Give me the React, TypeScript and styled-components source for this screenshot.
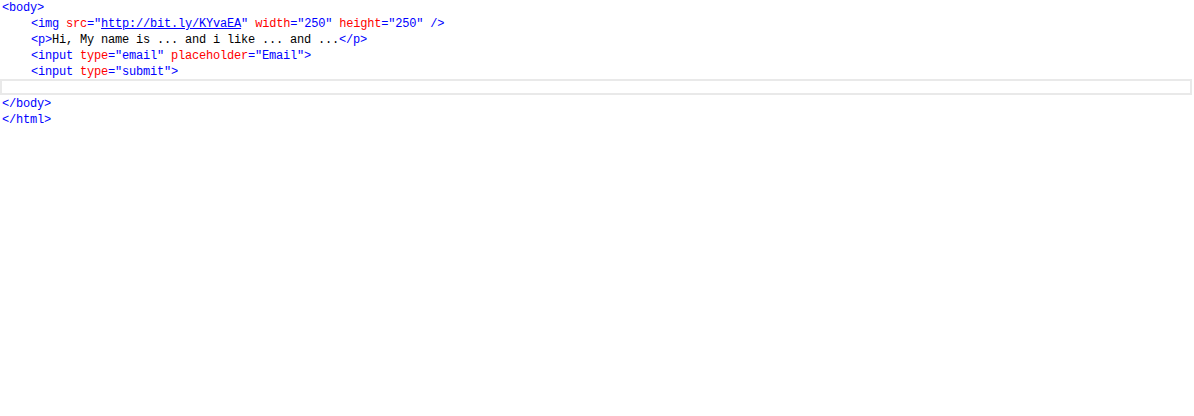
import React from "react";
import styled, { createGlobalStyle } from "styled-components";

const Global = createGlobalStyle`
  html, body { margin: 0; padding: 0; background: #ffffff; }
`;

const Editor = styled.div`
  font-family: "Liberation Mono", "DejaVu Sans Mono", monospace;
  font-size: 12px;
  letter-spacing: -0.2px;
  width: 1194px;
  height: 416px;
  background: #fff;
`;

const Line = styled.div<{ $indented?: boolean }>`
  height: 16px;
  line-height: 16px;
  padding-left: ${(p) => (p.$indented ? 31 : 2)}px;
  white-space: pre;
  color: #000;
`;

const CurrentLine = styled.div`
  height: 16px;
  box-sizing: border-box;
  margin-top: -1px;
  margin-bottom: 1px;
  margin-right: 2px;
  border: 2px solid #e9e9e9;
`;

const Tag = styled.span`
  color: #0000ff;
`;
const Attr = styled.span`
  color: #ff0000;
`;
const Val = styled.span`
  color: #0000ff;
`;
const Link = styled.span`
  color: #0000ff;
  text-decoration: underline;
`;

export default function App() {
  return (
    <>
      <Global />
      <Editor>
        <Line>
          <Tag>&lt;body&gt;</Tag>
        </Line>
        <Line $indented>
          <Tag>&lt;img</Tag> <Attr>src</Attr>
          <Val>="</Val>
          <Link>http://bit.ly/KYvaEA</Link>
          <Val>"</Val> <Attr>width</Attr>
          <Val>="250"</Val> <Attr>height</Attr>
          <Val>="250"</Val> <Tag>/&gt;</Tag>
        </Line>
        <Line $indented>
          <Tag>&lt;p&gt;</Tag>Hi, My name is ... and i like ... and ...<Tag>&lt;/p&gt;</Tag>
        </Line>
        <Line $indented>
          <Tag>&lt;input</Tag> <Attr>type</Attr>
          <Val>="email"</Val> <Attr>placeholder</Attr>
          <Val>="Email"</Val>
          <Tag>&gt;</Tag>
        </Line>
        <Line $indented>
          <Tag>&lt;input</Tag> <Attr>type</Attr>
          <Val>="submit"</Val>
          <Tag>&gt;</Tag>
        </Line>
        <CurrentLine />
        <Line>
          <Tag>&lt;/body&gt;</Tag>
        </Line>
        <Line>
          <Tag>&lt;/html&gt;</Tag>
        </Line>
      </Editor>
    </>
  );
}
